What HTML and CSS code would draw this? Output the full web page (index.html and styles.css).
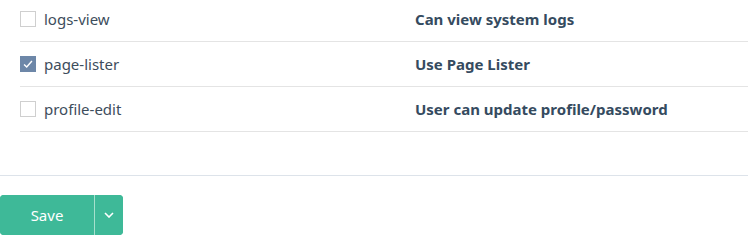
FILE: index.html
```html
<!DOCTYPE html>
<html lang="en">
<head>
    <meta charset="UTF-8">
    <title>Permissions</title>
    <link rel="stylesheet" href="styles.css">
</head>
<body>
    <div class="perm-list">
        <div class="perm-row">
            <label class="perm-name"><span class="box"></span>logs-view</label>
            <div class="perm-desc">Can view system logs</div>
        </div>
        <div class="perm-row">
            <label class="perm-name"><span class="box checked">
                <svg viewBox="0 0 16 16" width="16" height="16"><path d="M3.5 8.5 L6.5 11.5 L12.5 4.5" fill="none" stroke="#fff" stroke-width="1.6"/></svg>
            </span>page-lister</label>
            <div class="perm-desc">Use Page Lister</div>
        </div>
        <div class="perm-row">
            <label class="perm-name"><span class="box"></span>profile-edit</label>
            <div class="perm-desc">User can update profile/password</div>
        </div>
    </div>

    <div class="actions">
        <div class="btn-group">
            <button class="btn-save">Save</button>
            <button class="btn-drop">
                <svg viewBox="0 0 10 6" width="10" height="6"><path d="M1 1 L5 5 L9 1" fill="none" stroke="#fff" stroke-width="1.6"/></svg>
            </button>
        </div>
    </div>
</body>
</html>
```
FILE: styles.css
```css
* {
    margin: 0;
    padding: 0;
    box-sizing: border-box;
}

body {
    font-family: "Noto Sans", "Open Sans", sans-serif;
    font-size: 15px;
    color: #354b60;
    background: #fff;
    overflow: hidden;
}

.perm-list {
    margin-top: -3px;
    padding-left: 20px;
    padding-bottom: 43px;
    border-bottom: 1px solid #dde3ea;
}

.perm-row {
    display: flex;
    align-items: center;
    height: 45px;
    border-bottom: 1px solid #e4e4e4;
}

.perm-name {
    display: flex;
    align-items: center;
    width: 395px;
    color: #3d4d5c;
}

.box {
    width: 16px;
    height: 16px;
    border: 1px solid #cfcfcf;
    margin-right: 8px;
    display: flex;
    align-items: center;
    justify-content: center;
}

.box.checked {
    background: #6d87a8;
    border-color: #6d87a8;
}

.perm-desc {
    font-weight: 700;
    color: #354b60;
}

.actions {
    padding-top: 19px;
}

.btn-group {
    display: flex;
    width: 123px;
    height: 40px;
    border-radius: 4px;
    overflow: hidden;
    background: #3eb998;
}

.btn-group button {
    border: none;
    background: #3eb998;
    color: #fff;
    font-family: inherit;
    font-size: 15px;
    cursor: pointer;
}

.btn-save {
    width: 95px;
    border-right: 1px solid #a6e0cd !important;
}

.btn-drop {
    flex: 1;
    display: flex;
    align-items: center;
    justify-content: center;
}
```
